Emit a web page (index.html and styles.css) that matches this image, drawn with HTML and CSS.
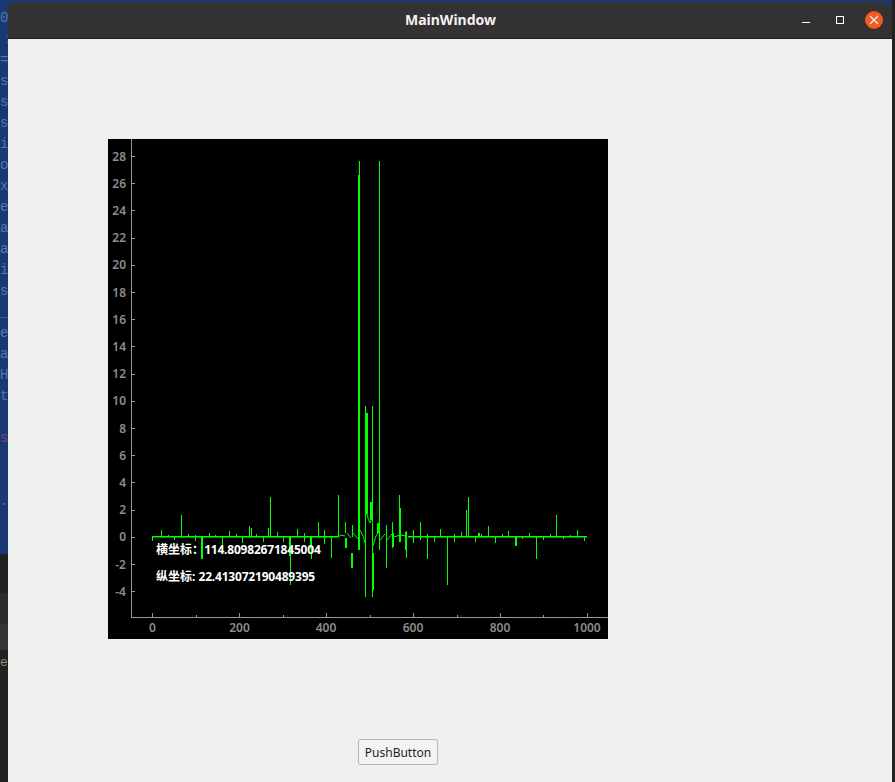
FILE: index.html
```html
<!DOCTYPE html>
<html lang="en">
<head>
<meta charset="utf-8">
<title>MainWindow</title>
<link rel="stylesheet" href="styles.css">
</head>
<body>
<div class="desk">
  <div class="editor">
    <div class="code">
      <div class="ln">0</div><div class="ln shift">x</div><div class="ln">=</div><div class="ln">s</div><div class="ln">s</div><div class="ln">s</div><div class="ln">i</div><div class="ln">o</div><div class="ln">x</div><div class="ln">e</div><div class="ln">a</div><div class="ln">a</div><div class="ln">i</div><div class="ln">s</div><div class="ln">_</div><div class="ln">e</div><div class="ln">a</div><div class="ln">H</div><div class="ln">t</div><div class="ln"></div><div class="ln pink">s</div><div class="ln"></div><div class="ln"></div><div class="ln">.</div>
    </div>
    <div class="terminal">
      <div class="band-a"></div>
      <div class="band-b"></div>
      <div class="term-text">e</div>
    </div>
  </div>
  <div class="window">
    <header class="titlebar">
      <div class="title">MainWindow</div>
      <div class="controls">
        <span class="ctl"><span class="minimize"></span></span>
        <span class="ctl"><span class="maximize"></span></span>
        <span class="close">
          <svg viewBox="0 0 10 10" width="10" height="10"><path class="close-x" d="M1 1 9 9M9 1 1 9"/></svg>
        </span>
      </div>
    </header>
    <main class="content">
      <svg class="plot" viewBox="108 139 500 500" width="500" height="500">
        <rect x="108" y="139" width="500" height="500" fill="#000"/>
        <path class="axis" d="M131.5 139V617.5H608"/>
        <path class="axis" d="M132 156.5h3M132 183.5h3M132 210.5h3M132 238h3M132 265h3M132 292h3M132 319h3M132 346h3M132 374h3M132 401h3M132 428h3M132 455h3M132 482h3M132 510h3M132 537h3M132 564h3M132 591h3"/>
        <path class="axis" d="M152.5 612.5v5M239.5 612.5v5M326.5 612.5v5M413.5 612.5v5M500.5 612.5v5M587.5 612.5v5M196.5 615v3M283.5 615v3M370 615v3M457 615v3M543.5 615v3"/>
        <g class="ylabels">
          <text x="126" y="161">28</text><text x="126" y="188">26</text><text x="126" y="215">24</text><text x="126" y="242">22</text><text x="126" y="269">20</text><text x="126" y="297">18</text><text x="126" y="324">16</text><text x="126" y="351">14</text><text x="126" y="378">12</text><text x="126" y="405">10</text><text x="126" y="433">8</text><text x="126" y="460">6</text><text x="126" y="487">4</text><text x="126" y="514">2</text><text x="126" y="541">0</text><text x="126" y="569">-2</text><text x="126" y="596">-4</text>
        </g>
        <g class="xlabels">
          <text x="152.5" y="632">0</text><text x="239.5" y="632">200</text><text x="326" y="632">400</text><text x="413" y="632">600</text><text x="500" y="632">800</text><text x="587" y="632">1000</text>
        </g>
        <path class="base" d="M152 536.700H338M408 536.700H587"/>
        <path class="line" d="M152.500 537V541M161.500 537V530M168.500 537V535M174.500 537V540M181.500 537V515M188.500 537V534M195.500 535V541M222.500 537V552M209.500 537V533M215.500 537V535M229.500 537V531M236.500 537V534M242.500 537V543M249.500 537V526M251.500 537V528M256.500 537V534M263.500 537V542M270.500 537V497M268.500 537V528M277.500 537V532M283.500 537V542M290.500 556V585M297.500 537V529M304.500 533V542M311.500 549V559M318.500 537V522M324.500 530V544M331.500 537V558M338.500 537V495M345.500 522V533M352.500 525V537M359.500 161V175M365.500 406V597M372.500 406V597M379.500 161V550M386.500 525V568M392.500 522V548M399.500 495V510M406.500 531V558M413.500 530V543M420.500 522V540M427.500 534V559M434.500 537V542M440.500 529V537M447.500 537V585M454.500 534V542M461.500 537V532M468.500 497V537M466.500 510V537M475.500 537V542M481.500 537V534M488.500 537V526M495.500 537V543M502.500 537V534M508.500 537V531M515.500 537V546M522.500 537V539M529.500 537V533M536.500 537V559M543.500 537V540M550.500 537V534M556.500 515V537M563.500 537V539M570.500 537V535M577.500 537V530M584.500 537V541"/>
        <path class="spike" d="M202 537V559M290 537V556M311 537V549M346 538V548M352 553V568M359 175V550M367 413V514M371 502V520M373 553V590M378 523V533M393 533V547M400 508V542M406 532V550M516 537V546M479 533V537"/>
        <path class="wave" d="M338 537 341 535 345 536M347 533 351 538M353 533 358 539M360 530 363 536 365 543M367 514 368.500 520 370 523 371 520M373 546 376 536 379 531M380 540 385 534M387 540 392 534M394 537 400 535 406 536"/>
        <text class="readout" x="156" y="554">横坐标： <tspan class="num" dx="-3">114.80982671845004</tspan></text>
        <text class="readout" x="156" y="581">纵坐标: <tspan class="num">22.413072190489395</tspan></text>
      </svg>
      <button class="push" type="button">PushButton</button>
    </main>
  </div>
  <div class="edge"></div>
</div>
</body>
</html>
```
FILE: styles.css
```css
* { box-sizing: border-box; }
html, body { margin: 0; padding: 0; }
body { width: 895px; height: 782px; overflow: hidden; background: #222; }

.desk { display: flex; width: 895px; height: 782px; }

.editor { width: 8px; flex: none; display: flex; flex-direction: column; overflow: hidden; }
.code {
  height: 554px; flex: none; background: #1a3872;
  padding-top: 8px; overflow: hidden;
  font: 14px/21px "Liberation Mono", monospace; color: #4d7ba6;
}
.ln { height: 21px; white-space: nowrap; }
.shift { padding-left: 6px; }
.pink { color: #7a4585; }
.terminal { flex: 1; background: #222; display: flex; flex-direction: column; padding-top: 39px; }
.band-a { height: 31px; background: #2b2b2d; flex: none; }
.band-b { height: 26px; background: #333536; flex: none; }
.term-text { font: 13px/20px "Liberation Mono", monospace; color: #9c8a70; padding-top: 3px; }

.window { flex: none; width: 884px; padding-top: 2px; background: #1a3872; display: flex; flex-direction: column; }
.titlebar {
  height: 37px; flex: none; position: relative;
  background: #333131; border-bottom: 1px solid #232222;
  border-radius: 8px 8px 0 0;
  display: flex; align-items: center; justify-content: center;
}
.title {
  font: 700 14px "Noto Sans", "Open Sans", sans-serif; color: #f4f2f0;
  margin-left: 1px; margin-top: -1px;
}
.controls { position: absolute; right: 9px; top: 8px; display: flex; align-items: center; gap: 8px; }
.ctl { width: 26px; height: 20px; display: flex; align-items: center; justify-content: center; }
.minimize { width: 8px; height: 1px; background: #fff; margin-top: 4px; }
.maximize { width: 8px; height: 8px; border: 1px solid #fff; }
.close {
  width: 18px; height: 18px; border-radius: 50%; background: #ee5b23;
  display: flex; align-items: center; justify-content: center; margin-left: 4px;
}
.close-x { stroke: #fbe7dd; stroke-width: 1.4; fill: none; }

.content { flex: 1; background: #efefef; display: flex; flex-direction: column; align-items: flex-start; padding: 100px 0 0 100px; }
.plot { display: block; flex: none; }
.axis { stroke: #969696; stroke-width: 1; fill: none; shape-rendering: crispEdges; }
.ylabels text, .xlabels text {
  font: 600 12px "Noto Sans", "Open Sans", sans-serif; fill: #8c8c8c;
}
.ylabels text { text-anchor: end; }
.xlabels text { text-anchor: middle; }
.base { stroke: #00ff00; stroke-width: 1.4; fill: none; }
.line { stroke: #00ff00; stroke-width: 1; fill: none; shape-rendering: crispEdges; }
.wave { stroke: #00ff00; stroke-width: 1; fill: none; }
.spike { stroke: #00ff00; stroke-width: 2; fill: none; shape-rendering: crispEdges; }
.readout {
  font: 700 12px "Noto Sans", "Noto Sans CJK SC", sans-serif; fill: #ffffff;
}
.num { letter-spacing: -0.2px; }

.push {
  margin: 100px 0 0 250px; width: 80px; height: 26px; padding: 0;
  background: #f3f3f3; border: 1px solid #b3b3b3; border-radius: 3px;
  font: 12px "Noto Sans", "Open Sans", sans-serif; color: #232323;
}

.edge { flex: 1; background: #222; }
```
